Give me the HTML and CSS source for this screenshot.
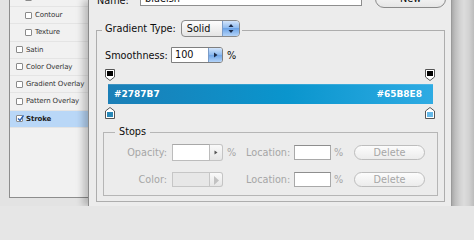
FILE: index.html
```html
<!DOCTYPE html>
<html>
<head>
<meta charset="utf-8">
<link rel="stylesheet" href="styles.css">
</head>
<body>
<div class="screen">
  <div class="side">
    <div class="list">
      <div class="row sub"><span class="cb"></span></div>
      <div class="row sub"><span class="cb"></span>Contour</div>
      <div class="row sub"><span class="cb"></span>Texture</div>
      <div class="row"><span class="cb"></span>Satin</div>
      <div class="row"><span class="cb"></span>Color Overlay</div>
      <div class="row"><span class="cb"></span>Gradient Overlay</div>
      <div class="row"><span class="cb"></span>Pattern Overlay</div>
      <div class="row sel"><span class="cb on"><svg width="7" height="7" viewBox="0 0 7 7"><path d="M1 3.5L3 5.5L6.5 0.5" fill="none" stroke="#2a5fb0" stroke-width="1.4"/></svg></span>Stroke</div>
    </div>
  </div>
  <div class="dialog">
    <div class="name-row">
      <span class="name-lbl">Name:</span>
      <div class="name-input">blueish</div>
      <div class="btn-new">New</div>
    </div>
    <div class="gfs">
      <div class="legend">
        <span>Gradient Type:</span>
        <div class="select">
          <span class="sel-text">Solid</span>
          <span class="sel-arrows"><svg width="16" height="15" viewBox="0 0 16 15"><path d="M8 3L10.5 6H5.5Z" fill="#1c2b48"/><path d="M8 12L10.5 9H5.5Z" fill="#1c2b48"/></svg></span>
        </div>
      </div>
      <div class="smooth-row">
        <span class="smooth-lbl">Smoothness:</span>
        <div class="num">
          <span class="num-val">100</span>
          <span class="num-step"><svg width="13" height="14" viewBox="0 0 13 14"><path d="M5 4.5L8.5 7L5 9.5Z" fill="#1c2b48"/></svg></span>
        </div>
        <span class="pct">%</span>
      </div>
      <div class="markers">
        <svg width="10" height="12" viewBox="0 0 10 12"><path d="M0.5 0.5H9.5V8L5 11.5L0.5 8Z" fill="#fff" stroke="#555"/><rect x="2" y="2" width="6" height="5" fill="#000"/></svg>
        <svg width="10" height="12" viewBox="0 0 10 12"><path d="M0.5 0.5H9.5V8L5 11.5L0.5 8Z" fill="#fff" stroke="#555"/><rect x="2" y="2" width="6" height="5" fill="#000"/></svg>
      </div>
      <div class="bar"><span>#2787B7</span><span>#65B8E8</span></div>
      <div class="markers bottom">
        <svg width="10" height="12" viewBox="0 0 10 12"><path d="M5 0.5L9.5 4V11.5H0.5V4Z" fill="#fff" stroke="#555"/><rect x="2" y="5" width="6" height="5" fill="#2787B7"/></svg>
        <svg width="10" height="12" viewBox="0 0 10 12"><path d="M5 0.5L9.5 4V11.5H0.5V4Z" fill="#fff" stroke="#555"/><rect x="2" y="5" width="6" height="5" fill="#65B8E8"/></svg>
      </div>
      <div class="sfs">
        <div class="legend2">Stops</div>
        <div class="srow first">
          <span class="slbl">Opacity:</span>
          <div class="dnum">
            <span class="dnum-val"></span>
            <span class="dnum-step"><svg width="12" height="15" viewBox="0 0 12 15"><path d="M4.5 5.5L7.5 7.5L4.5 9.5Z" fill="#555"/></svg></span>
          </div>
          <span class="spct">%</span>
          <span class="loc-lbl">Location:</span>
          <div class="loc-input"></div>
          <span class="spct2">%</span>
          <div class="btn-del">Delete</div>
        </div>
        <div class="srow">
          <span class="slbl">Color:</span>
          <div class="swatch">
            <span class="swatch-col"></span>
            <span class="swatch-step"><svg width="12" height="15" viewBox="0 0 12 15"><path d="M4 3L9 7.5L4 12Z" fill="#c2c2c2"/></svg></span>
          </div>
          <span class="spct"></span>
          <span class="loc-lbl">Location:</span>
          <div class="loc-input"></div>
          <span class="spct2">%</span>
          <div class="btn-del">Delete</div>
        </div>
      </div>
    </div>
  </div>
  <div class="edge"></div>
</div>
</body>
</html>
```
FILE: styles.css
```css
html, body {
  margin: 0;
  padding: 0;
}
html {
  background: #e6e6e6;
}
body {
  width: 474px;
  height: 206px;
  overflow: hidden;
  background: #d6d6d6;
  font-family: "DejaVu Sans", "Liberation Sans", sans-serif;
}
.screen {
  display: flex;
  height: 206px;
  overflow: hidden;
}

/* left layer list */
.side {
  width: 88px;
  flex: none;
  background: #e3e3e3;
}
.list {
  margin: -10.25px 0 0 9px;
  height: 208.25px;
  box-sizing: border-box;
  border-left: 1px solid #8d8d8d;
  border-bottom: 1px solid #8d8d8d;
  background: #f1f1f1;
}
.row {
  height: 17.25px;
  box-sizing: border-box;
  border-bottom: 1px solid #e4e4e4;
  display: flex;
  align-items: center;
  padding-left: 6px;
  font-size: 7px;
  letter-spacing: -0.1px;
  color: #333;
  white-space: nowrap;
}
.row.sub {
  padding-left: 15px;
}
.row.sel {
  background: #b9d7f7;
  font-weight: bold;
  color: #222;
}
.cb {
  width: 7px;
  height: 7px;
  box-sizing: border-box;
  border: 1px solid #8a8a8a;
  border-radius: 1px;
  background: #fff;
  margin-right: 3px;
  flex: none;
}
.cb svg {
  display: block;
  margin: -1px 0 0 0;
}

/* dialog */
.dialog {
  width: 364px;
  flex: none;
  box-sizing: border-box;
  background: #ececec;
  border-left: 1px solid #8a8a8a;
  border-right: 1px solid #9a9a9a;
  box-shadow: -5px 0 7px rgba(0, 0, 0, 0.22);
  font-size: 9.7px;
  color: #0c0c0c;
}
.name-row {
  display: flex;
  height: 23px;
  margin-top: -15px;
  padding-left: 8px;
}
.name-lbl {
  width: 43px;
  align-self: flex-end;
  line-height: 11px;
  margin-bottom: 2px;
}
.name-input {
  width: 222px;
  height: 20px;
  margin-top: 1px;
  box-sizing: border-box;
  border: 1px solid #8e8e8e;
  background: #fff;
  padding: 0 0 1px 4px;
  display: flex;
  align-items: flex-end;
  line-height: 11px;
}
.btn-new {
  margin-left: 13px;
  width: 71px;
  height: 20px;
  align-self: flex-end;
  box-sizing: border-box;
  border: 1px solid #8a8a8a;
  border-radius: 9px;
  background: linear-gradient(#ffffff, #e6e6e6);
  display: flex;
  align-items: center;
  justify-content: center;
}

.gfs {
  margin: 22px 6px 0 7px;
  border: 1px solid #adadad;
  padding-bottom: 5px;
}
.legend {
  display: flex;
  align-items: center;
  gap: 5px;
  width: fit-content;
  height: 17px;
  margin: -11px 0 0 5px;
  padding: 0 2px 0 3px;
  background: #ececec;
}
.select {
  width: 59px;
  height: 17px;
  box-sizing: border-box;
  border: 1px solid #8a8a8a;
  border-radius: 4px;
  background: linear-gradient(#fdfdfd, #e4e4e4);
  display: flex;
  overflow: hidden;
}
.sel-text {
  flex: 1;
  padding-left: 5px;
  line-height: 15px;
}
.sel-arrows {
  width: 16px;
  border-left: 1px solid #7b9cc8;
  background: linear-gradient(#d3e5fb, #8ab8ee 50%, #6da4e7 50%, #b3d3f8);
}
.sel-arrows svg, .num-step svg, .dnum-step svg, .swatch-step svg {
  display: block;
}

.smooth-row {
  display: flex;
  align-items: center;
  height: 16px;
  margin-top: 10px;
  padding-left: 8px;
}
.smooth-lbl {
  width: 66px;
}
.num {
  width: 52px;
  height: 16px;
  box-sizing: border-box;
  border: 1px solid #7f7f7f;
  border-radius: 0 3px 3px 0;
  background: #fff;
  display: flex;
  overflow: hidden;
}
.num-val {
  flex: 1;
  padding-left: 3px;
  line-height: 14px;
}
.num-step {
  width: 13px;
  border-left: 1px solid #7b9cc8;
  background: linear-gradient(#d3e5fb, #8ab8ee 50%, #6da4e7 50%, #b3d3f8);
}
.pct {
  margin-left: 4px;
}

.markers {
  display: flex;
  justify-content: space-between;
  height: 12px;
  margin: 6px 9px 0 8px;
}
.markers svg {
  display: block;
}
.markers.bottom {
  margin-top: 3px;
}
.bar {
  height: 20px;
  margin: 3px 11px 0 11px;
  background: linear-gradient(to right, #1b7fb7, #0a95cd 55%, #2eabe3);
  box-shadow: inset 0 1px 0 rgba(255, 255, 255, 0.15);
  display: flex;
  justify-content: space-between;
  align-items: center;
  padding: 0 11px 0 6px;
  color: #fff;
  font-size: 9px;
  font-weight: bold;
}

.sfs {
  margin: 13px 6px 0 6px;
  border: 1px solid #b6b6b6;
  padding-bottom: 7px;
}
.legend2 {
  width: fit-content;
  height: 12px;
  line-height: 12px;
  margin: -7px 0 0 11px;
  padding: 0 4px;
  background: #ececec;
}
.srow {
  display: flex;
  align-items: center;
  height: 17px;
  margin-top: 10px;
  color: #a6a6a6;
}
.srow.first {
  margin-top: 6px;
}
.slbl {
  width: 63px;
  text-align: right;
  margin-right: 5px;
}
.dnum, .swatch {
  width: 51px;
  display: flex;
  flex: none;
}
.dnum {
  height: 17px;
}
.swatch {
  height: 15px;
}
.dnum-val {
  width: 38px;
  box-sizing: border-box;
  border: 1px solid #bcbcbc;
  border-top-color: #a8a8a8;
  background: #fff;
}
.dnum-step, .swatch-step {
  width: 13px;
  box-sizing: border-box;
  border: 1px solid #c4c4c4;
  border-left: none;
  border-radius: 0 3px 3px 0;
  background: linear-gradient(#fafafa, #e6e6e6);
}
.swatch-col {
  width: 38px;
  box-sizing: border-box;
  border: 1px solid #c6c6c6;
  background: #e7e7e7;
}
.spct {
  width: 23px;
  padding-left: 4px;
  box-sizing: border-box;
}
.loc-lbl {
  width: 48px;
}
.loc-input {
  width: 37px;
  height: 15px;
  box-sizing: border-box;
  border: 1px solid #a9a9a9;
  border-top-color: #8e8e8e;
  background: #fff;
}
.spct2 {
  width: 23px;
  padding-left: 3px;
  box-sizing: border-box;
}
.btn-del {
  width: 71px;
  height: 15px;
  box-sizing: border-box;
  border: 1px solid #bdbdbd;
  border-radius: 8px;
  background: linear-gradient(#fcfcfc, #ececec);
  display: flex;
  align-items: center;
  justify-content: center;
}

.edge {
  flex: 1;
  background: linear-gradient(to right, #a9a9a9 0, #bdbdbd 3px, #d2d2d2 8px, #dcdcdc 12px, #d2d2d2 17px, #bcbcbc 22px);
}
```
